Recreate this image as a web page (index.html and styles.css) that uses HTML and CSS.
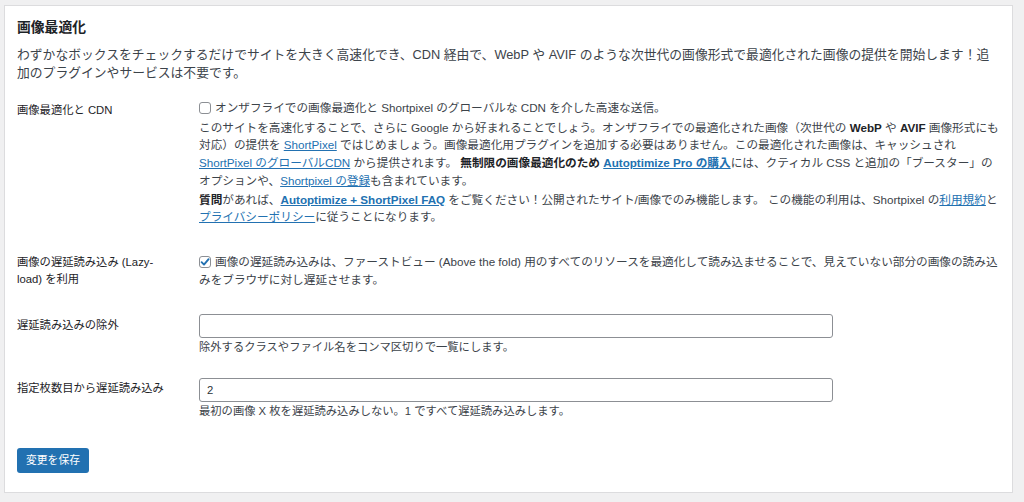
FILE: index.html
```html
<!DOCTYPE html>
<html lang="ja">
<head>
<meta charset="utf-8">
<title>画像最適化</title>
<link rel="stylesheet" href="styles.css">
</head>
<body>
<div class="panel">
  <h2 class="title">画像最適化</h2>
  <p class="intro">わずかなボックスをチェックするだけでサイトを大きく高速化でき、CDN 経由で、WebP や AVIF のような次世代の画像形式で最適化された画像の提供を開始します！追加のプラグインやサービスは不要です。</p>

  <div class="form">
    <div class="th row1">画像最適化と CDN</div>
    <div class="td row1">
      <label class="check"><span class="box"></span>オンザフライでの画像最適化と Shortpixel のグローバルな CDN を介した高速な送信。</label>
      <p class="p1">このサイトを高速化することで、さらに Google から好まれることでしょう。オンザフライでの最適化された画像（次世代の <b>WebP</b> や <b>AVIF</b> 画像形式にも対応）の提供を <a href="#">ShortPixel</a> ではじめましょう。画像最適化用プラグインを追加する必要はありません。この最適化された画像は、キャッシュされ <a href="#">ShortPixel のグローバルCDN</a> から提供されます。 <b>無制限の画像最適化のため <a href="#">Autoptimize Pro の購入</a></b>には、クティカル CSS と追加の「ブースター」のオプションや、<a href="#">Shortpixel の登録</a>も含まれています。</p>
      <p class="p2"><b>質問</b>があれば、<a href="#"><b>Autoptimize + ShortPixel FAQ</b></a> をご覧ください！公開されたサイト/画像でのみ機能します。 この機能の利用は、Shortpixel の<a href="#">利用規約</a>と<a href="#">プライバシーポリシー</a>に従うことになります。</p>
    </div>

    <div class="th row2">画像の遅延読み込み (Lazy-load) を利用</div>
    <div class="td row2">
      <label class="check"><span class="box checked"><svg viewBox="0 0 12 12" width="12" height="12"><path d="M2.6 6.2 L5 8.6 L9.6 3.2" fill="none" stroke="#2271b1" stroke-width="1.9" stroke-linecap="round" stroke-linejoin="round"/></svg></span>画像の遅延読み込みは、ファーストビュー (Above the fold) 用のすべてのリソースを最適化して読み込ませることで、見えていない部分の画像の読み込みをブラウザに対し遅延させます。</label>
    </div>

    <div class="th row3">遅延読み込みの除外</div>
    <div class="td row3">
      <div class="input"></div>
      <p class="desc">除外するクラスやファイル名をコンマ区切りで一覧にします。</p>
    </div>

    <div class="th row4">指定枚数目から遅延読み込み</div>
    <div class="td row4">
      <div class="input">2</div>
      <p class="desc">最初の画像 X 枚を遅延読み込みしない。1 ですべて遅延読み込みします。</p>
    </div>
  </div>

  <div class="submit"><span class="button">変更を保存</span></div>
</div>
</body>
</html>
```

FILE: styles.css
```css
html, body {
  margin: 0;
  padding: 0;
  background: #f0f0f1;
}
body {
  font-family: "Liberation Sans", "Noto Sans CJK JP", sans-serif;
  color: #3c434a;
  height: 502px;
  overflow: hidden;
}
.panel {
  margin: 5px 11px 0 4px;
  height: 488px;
  box-sizing: border-box;
  background: #fff;
  border: 1px solid #dcdcde;
  padding: 0 12px;
}
.title {
  margin: 13px 0 0;
  font-size: 13.8px;
  line-height: 18px;
  font-weight: 700;
  color: #1d2327;
}
.intro {
  margin: 9px 0 0;
  font-size: 12.8px;
  line-height: 18px;
  color: #3c434a;
}
.form {
  display: grid;
  grid-template-columns: 182px 1fr;
}
.th {
  font-size: 11.3px;
  line-height: 17.5px;
  color: #1d2327;
  padding-right: 20px;
}
.td {
  font-size: 11.65px;
  line-height: 17.7px;
}
.th.row1 { padding-top: 20px; }
.td.row1 { padding-top: 17px; padding-bottom: 13px; }
.th.row2 { padding-top: 15px; padding-right: 40px; }
.td.row2 { padding-top: 14px; padding-bottom: 12px; }
.th.row3 { padding-top: 17px; }
.td.row3 { padding-top: 14px; padding-bottom: 8px; }
.th.row4 { padding-top: 16px; }
.td.row4 { padding-top: 14px; }
.check {
  display: block;
}
.box {
  display: inline-block;
  box-sizing: border-box;
  width: 12px;
  height: 12px;
  border: 1px solid #8c8f94;
  border-radius: 3px;
  background: #fff;
  vertical-align: -2px;
  margin-right: 4px;
  position: relative;
}
.box svg {
  position: absolute;
  left: -1px;
  top: -1px;
}
.td p {
  margin: 0;
}
.p1 { margin-top: 2px !important; }
.p2 { margin-top: 1px !important; }
a {
  color: #2271b1;
  text-decoration: underline;
}
b {
  color: #1d2327;
  font-weight: 700;
}
a b { color: #2271b1; }
.input {
  box-sizing: border-box;
  width: 634px;
  height: 24px;
  border: 1px solid #8c8f94;
  border-radius: 3px;
  padding: 0 7px;
  font-size: 11.3px;
  line-height: 22px;
  color: #2c3338;
}
.desc {
  font-size: 11.3px;
  line-height: 18px;
}
.submit {
  padding-top: 28px;
}
.button {
  display: inline-block;
  box-sizing: border-box;
  width: 72px;
  height: 25px;
  background: #2271b1;
  border-radius: 3px;
  color: #fff;
  font-size: 10.8px;
  line-height: 25px;
  text-align: center;
}
```
